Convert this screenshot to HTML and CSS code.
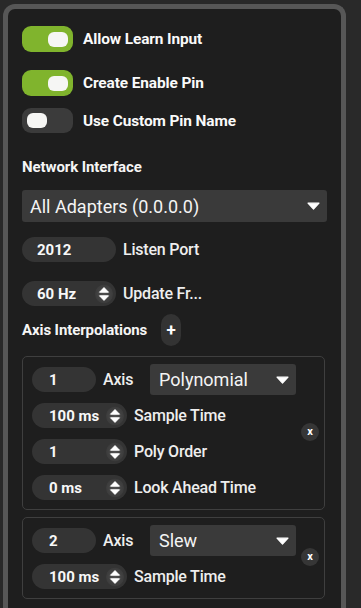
FILE: index.html
```html
<!DOCTYPE html>
<html>
<head>
<meta charset="utf-8">
<link rel="stylesheet" href="styles.css">
</head>
<body>
<div class="panel">
  <div class="toggle-row first">
    <span class="toggle on"><span class="knob"></span></span>
    <span class="toggle-label">Allow Learn Input</span>
  </div>
  <div class="toggle-row second">
    <span class="toggle on"><span class="knob"></span></span>
    <span class="toggle-label">Create Enable Pin</span>
  </div>
  <div class="toggle-row third">
    <span class="toggle off"><span class="knob"></span></span>
    <span class="toggle-label">Use Custom Pin Name</span>
  </div>

  <div class="section-title">Network Interface</div>
  <div class="dropdown wide"><span>All Adapters (0.0.0.0)</span><svg class="caret" width="13" height="8" viewBox="0 0 13 8"><path d="M1 1.2 H12 L6.5 7 Z" fill="#fff" stroke="#fff" stroke-width="1.2" stroke-linejoin="round"/></svg></div>

  <div class="field-row port">
    <span class="pill main"><span class="val">2012</span></span>
    <span class="field-label">Listen Port</span>
  </div>
  <div class="field-row rate">
    <span class="pill main"><span class="val">60 Hz</span><svg class="spin" width="14" height="16" viewBox="0 0 14 16"><path d="M2.5 6.2 L7 1.6 L11.5 6.2 Z M2.5 9.8 L7 14.4 L11.5 9.8 Z" fill="#fff" stroke="#fff" stroke-width="1" stroke-linejoin="round"/></svg></span>
    <span class="field-label">Update Fr...</span>
  </div>

  <div class="axis-head">
    <span class="section-title inline">Axis Interpolations</span>
    <span class="plus">+</span>
  </div>

  <div class="axis-box">
    <div class="axis-rows">
      <div class="axis-top">
        <span class="pill small"><span class="val">1</span></span>
        <span class="field-label axis">Axis</span>
        <div class="dropdown mode"><span>Polynomial</span><svg class="caret" width="13" height="8" viewBox="0 0 13 8"><path d="M1 1.2 H12 L6.5 7 Z" fill="#fff" stroke="#fff" stroke-width="1.2" stroke-linejoin="round"/></svg></div>
      </div>
      <div class="field-row inbox">
        <span class="pill spinp"><span class="val">100 ms</span><svg class="spin" width="14" height="16" viewBox="0 0 14 16"><path d="M2.5 6.2 L7 1.6 L11.5 6.2 Z M2.5 9.8 L7 14.4 L11.5 9.8 Z" fill="#fff" stroke="#fff" stroke-width="1" stroke-linejoin="round"/></svg></span>
        <span class="field-label">Sample Time</span>
      </div>
      <div class="field-row inbox">
        <span class="pill spinp"><span class="val">1</span><svg class="spin" width="14" height="16" viewBox="0 0 14 16"><path d="M2.5 6.2 L7 1.6 L11.5 6.2 Z M2.5 9.8 L7 14.4 L11.5 9.8 Z" fill="#fff" stroke="#fff" stroke-width="1" stroke-linejoin="round"/></svg></span>
        <span class="field-label">Poly Order</span>
      </div>
      <div class="field-row inbox">
        <span class="pill spinp"><span class="val">0 ms</span><svg class="spin" width="14" height="16" viewBox="0 0 14 16"><path d="M2.5 6.2 L7 1.6 L11.5 6.2 Z M2.5 9.8 L7 14.4 L11.5 9.8 Z" fill="#fff" stroke="#fff" stroke-width="1" stroke-linejoin="round"/></svg></span>
        <span class="field-label">Look Ahead Time</span>
      </div>
    </div>
    <span class="close">x</span>
  </div>

  <div class="axis-box second-box">
    <div class="axis-rows">
      <div class="axis-top">
        <span class="pill small"><span class="val">2</span></span>
        <span class="field-label axis">Axis</span>
        <div class="dropdown mode"><span>Slew</span><svg class="caret" width="13" height="8" viewBox="0 0 13 8"><path d="M1 1.2 H12 L6.5 7 Z" fill="#fff" stroke="#fff" stroke-width="1.2" stroke-linejoin="round"/></svg></div>
      </div>
      <div class="field-row inbox">
        <span class="pill spinp"><span class="val">100 ms</span><svg class="spin" width="14" height="16" viewBox="0 0 14 16"><path d="M2.5 6.2 L7 1.6 L11.5 6.2 Z M2.5 9.8 L7 14.4 L11.5 9.8 Z" fill="#fff" stroke="#fff" stroke-width="1" stroke-linejoin="round"/></svg></span>
        <span class="field-label">Sample Time</span>
      </div>
    </div>
    <span class="close">x</span>
  </div>
</div>
</body>
</html>
```

FILE: styles.css
```css
* { box-sizing: border-box; }
html, body {
  margin: 0;
  padding: 0;
  background: #292929;
  height: 608px;
  overflow: hidden;
  font-family: Roboto, "Liberation Sans", sans-serif;
  color: #f2f2f2;
}
.panel {
  margin: 4px 0 0 3px;
  width: 343px;
  height: 640px;
  border: 5px solid #575757;
  border-bottom: none;
  border-radius: 12px 12px 0 0;
  background: #1e1e1e;
  padding: 17px 0 0 14px;
  display: flex;
  flex-direction: column;
}
.toggle-row {
  display: flex;
  align-items: center;
  height: 26px;
}
.toggle-row.second { margin-top: 18px; }
.toggle-row.third { margin-top: 12px; height: 25px; }
.toggle {
  width: 51px;
  height: 26px;
  border-radius: 9px;
  display: flex;
  align-items: center;
  padding: 0 5px;
}
.toggle.on { background: #80b42d; justify-content: flex-end; }
.toggle.off { background: #3b3b3b; height: 25px; justify-content: flex-start; }
.knob {
  width: 20px;
  height: 15px;
  border-radius: 6px;
  background: #f6f6f4;
}
.toggle-label {
  margin-left: 10px;
  font-weight: 700;
  font-size: 15.4px;
  letter-spacing: -0.1px;
  color: #fafafa;
}
.section-title {
  margin-top: 25px;
  font-weight: 700;
  font-size: 15px;
  letter-spacing: -0.1px;
  line-height: 18px;
  height: 18px;
  color: #f5f5f5;
}
.section-title.inline { margin-top: 0; }
.dropdown {
  display: flex;
  align-items: center;
  justify-content: space-between;
  background: #3a3a3a;
  border-radius: 3px;
  font-size: 18px;
  color: #f4f4f4;
}
.dropdown.wide {
  margin-top: 14px;
  width: 305px;
  height: 32px;
  padding: 0 7px 0 8px;
}
.dropdown.mode {
  width: 146px;
  height: 31px;
  padding: 0 7px 0 9px;
  margin-left: 17px;
}
.caret { display: block; }
.field-row {
  display: flex;
  align-items: center;
}
.field-row.port { margin-top: 15px; }
.field-row.rate { margin-top: 19px; }
.pill {
  display: flex;
  align-items: center;
  justify-content: space-between;
  height: 25px;
  border-radius: 13px;
  background: #343434;
  padding: 0 3px 0 15px;
  font-weight: 700;
  font-size: 15px;
  color: #f8f8f8;
}
.pill.main { width: 94px; }
.pill.small { width: 64px; padding-left: 17px; }
.pill.spinp { width: 95px; padding-left: 17px; }
.spin {
  display: block;
  border-radius: 50%;
  background: radial-gradient(circle, #505050 0%, #3c3c3c 65%, transparent 72%);
  width: 18px;
  height: 20px;
  padding: 2px;
}
.field-label {
  margin-left: 7px;
  font-size: 16px;
  font-weight: 500;
  letter-spacing: -0.2px;
  color: #eeeeee;
}
.field-label.axis { margin-left: 7px; width: 30px; }
.axis-head {
  margin-top: 8px;
  display: flex;
  align-items: center;
  height: 32px;
}
.plus {
  margin-left: 14px;
  width: 20px;
  height: 32px;
  border-radius: 10px;
  background: #333333;
  display: flex;
  align-items: center;
  justify-content: center;
  font-weight: 700;
  font-size: 17px;
  color: #fff;
}
.axis-box {
  margin-top: 10px;
  width: 303px;
  border: 1px solid #3f3f3f;
  border-radius: 5px;
  padding: 7px 5px 9px 9px;
  display: flex;
  align-items: center;
  justify-content: space-between;
}
.axis-box.second-box { margin-top: 7px; }
.axis-rows {
  display: flex;
  flex-direction: column;
}
.axis-top {
  display: flex;
  align-items: center;
  height: 31px;
}
.field-row.inbox { margin-top: 11px; }
.axis-top + .field-row.inbox { margin-top: 8px; }
.close {
  width: 18px;
  height: 18px;
  border-radius: 50%;
  background: #363636;
  display: flex;
  align-items: center;
  justify-content: center;
  font-weight: 700;
  font-size: 11px;
  line-height: 1;
  color: #fff;
  padding-bottom: 2px;
}
```
